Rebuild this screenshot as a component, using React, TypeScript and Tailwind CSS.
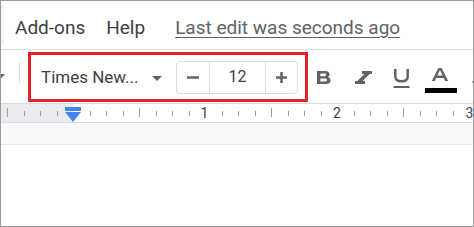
import React from 'react';

const FONT = "font-['Roboto','Liberation_Sans',sans-serif]";

function Ruler() {
  // minor ticks every 1/8 inch (16.5px), taller ones on the half inch
  const ticks: { x: number; major: boolean }[] = [];
  for (let k = 0; k <= 28; k++) {
    if (k % 8 === 4) continue;
    ticks.push({ x: Math.round(7 + 16.5 * k), major: k % 8 === 0 });
  }
  const nums = [
    { x: 204.5, label: '1' },
    { x: 337, label: '2' },
    { x: 469.5, label: '3' },
  ];

  return (
    <svg width="472" height="18" viewBox="1 105 472 18" className="block">
      <rect x="1" y="105" width="72" height="18" fill="#e9ebee" />
      {ticks.map((t) => (
        <rect
          key={t.x}
          x={t.x}
          y={t.major ? 109 : 112}
          width="1"
          height={t.major ? 9 : 5}
          fill="#9aa0a6"
        />
      ))}
      {nums.map((n) => (
        <text
          key={n.label}
          x={n.x}
          y="119"
          textAnchor="middle"
          fontSize="14"
          fill="#3c4043"
          fontFamily="Roboto, 'Liberation Sans', sans-serif"
        >
          {n.label}
        </text>
      ))}
      {/* indent marker */}
      <rect x="65" y="108" width="16" height="4" fill="#4285f4" />
      <polygon points="65,113 81,113 73,123" fill="#4285f4" />
    </svg>
  );
}

export default function App() {
  return (
    <div className={`w-[474px] h-[227px] overflow-hidden bg-white border border-[#9b9b9b] flex flex-col ${FONT}`}>
      {/* Menu row */}
      <div className="h-[49px] shrink-0 border-b border-[#dadce0] flex items-center pt-[4px] text-[19px] leading-none text-[#3c4043]">
        <div className="w-[3px] h-[40px] -mt-[4px] rounded-r-[3px] bg-[#f1f3f4]" />
        <span className="ml-[11px]">Add-ons</span>
        <span className="ml-[21px]">Help</span>
        <span className="ml-[30px] text-[#5f6368] underline underline-offset-[3px] decoration-1">
          Last edit was seconds ago
        </span>
      </div>

      {/* Toolbar */}
      <div className="h-[54px] shrink-0 border-b border-[#dadce0] flex items-start">
        <svg width="4" height="5" viewBox="0 0 4 5" className="mt-[24px] shrink-0">
          <polygon points="-5,0 4,0 -0.5,5" fill="#5f6368" />
        </svg>
        <div className="ml-[14px] mt-[12px] w-px h-[21px] bg-[#dadce0]" />

        {/* highlighted font controls */}
        <div className="ml-[8px] mt-[2px] w-[280px] h-[50px] border-[3px] border-[#e8202a] flex items-center pl-[10px]">
          <span className="w-[111px] text-[17px] leading-none text-[#3c4043] whitespace-nowrap">
            Times New...
          </span>
          <svg width="10" height="5" viewBox="0 0 10 5" className="shrink-0 mt-[3px]">
            <polygon points="0,0 10,0 5,5" fill="#5f6368" />
          </svg>
          <div className="ml-[14px] w-[122px] h-[33px] border border-[#dadce0] rounded-[4px] flex">
            <div className="w-[33px] border-r border-[#dadce0] flex items-center justify-center">
              <svg width="12" height="3" viewBox="0 0 12 3">
                <rect width="12" height="2.5" y="0.25" fill="#5f6368" />
              </svg>
            </div>
            <div className="w-[56px] border-r border-[#dadce0] flex items-center justify-center text-[16px] leading-none text-[#3c4043]">
              12
            </div>
            <div className="flex-1 flex items-center justify-center">
              <svg width="11" height="11" viewBox="0 0 11 11">
                <rect x="0" y="4.25" width="11" height="2.5" fill="#5f6368" />
                <rect x="4.25" y="0" width="2.5" height="11" fill="#5f6368" />
              </svg>
            </div>
          </div>
        </div>

        {/* Bold */}
        <svg width="14" height="13" viewBox="0 0 14 13" className="ml-[9px] mt-[21px] shrink-0">
          <path
            fillRule="evenodd"
            fill="#5f6368"
            d="M0 0H8C11 0 12.6 1.5 12.6 3.3C12.6 4.6 11.9 5.5 10.8 6C12.4 6.5 13.6 7.7 13.6 9.4C13.6 11.6 11.8 13 9 13H0ZM3.4 2.5H7.6C8.6 2.5 9.2 3 9.2 3.8C9.2 4.6 8.6 5.2 7.6 5.2H3.4ZM3.4 7.6H8.2C9.4 7.6 10.1 8.3 10.1 9.1C10.1 10 9.4 10.5 8.2 10.5H3.4Z"
          />
        </svg>

        {/* Italic */}
        <svg width="17" height="13" viewBox="0 0 17 13" className="ml-[24px] mt-[21px] shrink-0">
          <path fill="#5f6368" d="M7 0H17V3H14.6L7.6 10H10V13H0V10H2.4L9.4 3H7Z" />
        </svg>

        {/* Underline */}
        <svg width="17" height="19" viewBox="0 0 17 19" className="ml-[21px] mt-[19px] shrink-0">
          <path
            d="M2.3 0V7.2C2.3 10.6 4.9 12.3 8.5 12.3C12.1 12.3 14.7 10.6 14.7 7.2V0"
            fill="none"
            stroke="#5f6368"
            strokeWidth="2.5"
          />
          <rect x="0.5" y="17" width="16" height="2" fill="#5f6368" />
        </svg>

        {/* Text colour */}
        <svg width="32" height="25" viewBox="0 0 32 25" className="ml-[15px] mt-[18px] shrink-0">
          <path
            fillRule="evenodd"
            fill="#5f6368"
            d="M13.4 0H16.6L23.2 13H20.2L18.8 10H11.2L9.8 13H6.8ZM12.3 7.5H17.7L15 1.9Z"
          />
          <rect x="0" y="20" width="32" height="5" fill="#000" />
        </svg>

        <div className="ml-[15px] mt-[31px] w-px h-[2px] bg-[#9aa0a6]" />
      </div>

      {/* Ruler */}
      <div className="h-[19px] shrink-0 border-b border-[#dadce0]">
        <Ruler />
      </div>

      {/* Band under the ruler */}
      <div className="h-[22px] shrink-0 bg-[#f8f9fa] border-b border-[#e8eaed]" />

      <div className="flex-1 bg-white" />
    </div>
  );
}
